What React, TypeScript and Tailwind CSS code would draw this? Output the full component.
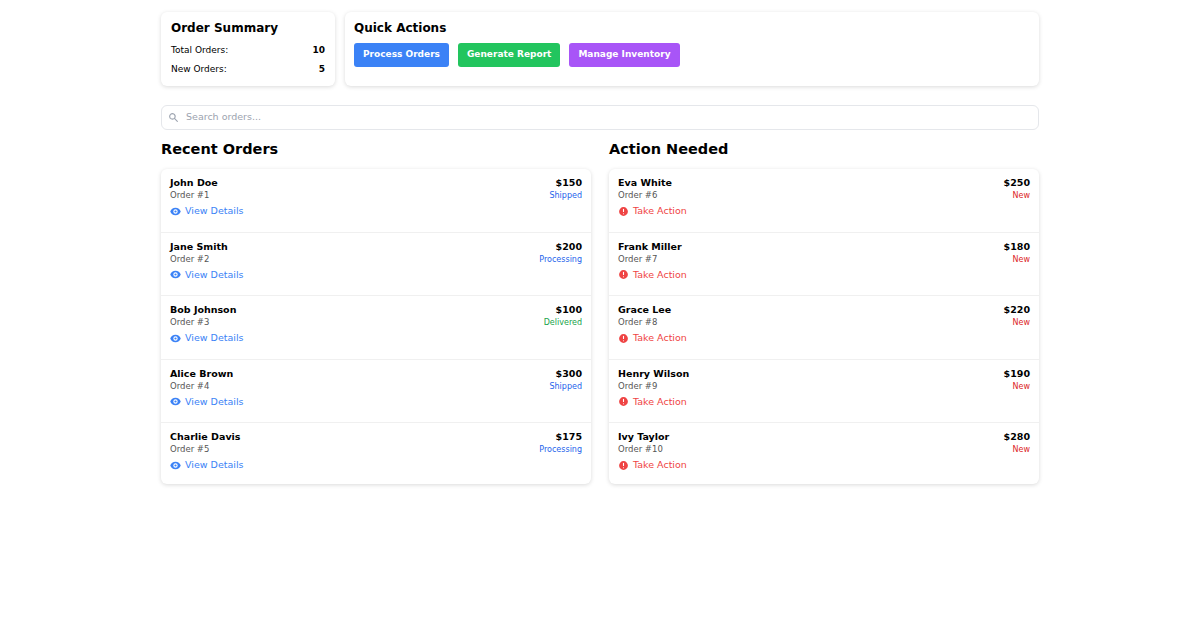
import React from "react";

const recent = [
  ["John Doe", 1, 150, "Shipped", "text-[#2563eb]"],
  ["Jane Smith", 2, 200, "Processing", "text-[#2563eb]"],
  ["Bob Johnson", 3, 100, "Delivered", "text-[#16a34a]"],
  ["Alice Brown", 4, 300, "Shipped", "text-[#2563eb]"],
  ["Charlie Davis", 5, 175, "Processing", "text-[#2563eb]"],
] as const;
const needed = [
  ["Eva White", 6, 250],
  ["Frank Miller", 7, 180],
  ["Grace Lee", 8, 220],
  ["Henry Wilson", 9, 190],
  ["Ivy Taylor", 10, 280],
] as const;

const Eye = () => (
  <svg width="11" height="11" viewBox="0 0 20 20" fill="#3b82f6">
    <path d="M10 12a2 2 0 100-4 2 2 0 000 4z" />
    <path fillRule="evenodd" d="M.458 10C1.732 5.943 5.522 3 10 3s8.268 2.943 9.542 7c-1.274 4.057-5.064 7-9.542 7S1.732 14.057.458 10zM14 10a4 4 0 11-8 0 4 4 0 018 0z" />
  </svg>
);
const Alert = () => (
  <svg width="11" height="11" viewBox="0 0 20 20" fill="#ef4444">
    <path fillRule="evenodd" d="M18 10a8 8 0 11-16 0 8 8 0 0116 0zm-7 4a1 1 0 11-2 0 1 1 0 012 0zm-1-9a1 1 0 00-1 1v4a1 1 0 102 0V6a1 1 0 00-1-1z" />
  </svg>
);

function Row({ name, n, amt, status, sc, last, action }: any) {
  return (
    <div className={`${last ? "h-[61px]" : "h-[63.5px] border-b border-[#f0f0f0]"} px-[9px] pt-[7px] flex justify-between`}>
      <div>
        <div className="text-[9.5px] font-bold text-black leading-[13px]">{name}</div>
        <div className="text-[8.5px] text-[#555] leading-[13px]">Order #{n}</div>
        <div className={`mt-[2px] flex items-center gap-[4px] text-[9.5px] ${action ? "text-[#ef4444]" : "text-[#3b82f6]"}`}>
          {action ? <Alert /> : <Eye />}
          <span>{action ? "Take Action" : "View Details"}</span>
        </div>
      </div>
      <div className="text-right">
        <div className="text-[9.5px] font-bold text-black leading-[13px]">${amt}</div>
        <div className={`text-[8px] leading-[13px] ${sc}`}>{status}</div>
      </div>
    </div>
  );
}

export default function App() {
  return (
    <div className="w-full h-[630px] bg-white" style={{ fontFamily: '"DejaVu Sans", sans-serif' }}>
      <div className="w-[878px] mx-auto pt-[12px]">
        <div className="flex gap-[10px]">
          <div className="w-[174px] h-[74px] rounded-md bg-white shadow-[0_1px_4px_rgba(0,0,0,0.15)] px-[10px] pt-[7px]">
            <div className="text-[12px] font-bold text-black">Order Summary</div>
            <div className="mt-[4px] flex justify-between text-[9px] leading-[19px] text-black"><span>Total Orders:</span><span className="font-bold">10</span></div>
            <div className="flex justify-between text-[9px] leading-[19px] text-black"><span>New Orders:</span><span className="font-bold">5</span></div>
          </div>
          <div className="flex-1 h-[74px] rounded-md bg-white shadow-[0_1px_4px_rgba(0,0,0,0.15)] px-[9px] pt-[7px]">
            <div className="text-[12px] font-bold text-black">Quick Actions</div>
            <div className="mt-[6px] flex gap-[9px]">
              <button className="h-[24px] px-[9px] rounded-[3px] bg-[#3b82f6] text-white text-[9px] font-bold">Process Orders</button>
              <button className="h-[24px] px-[9px] rounded-[3px] bg-[#22c55e] text-white text-[9px] font-bold">Generate Report</button>
              <button className="h-[24px] px-[9px] rounded-[3px] bg-[#a855f7] text-white text-[9px] font-bold">Manage Inventory</button>
            </div>
          </div>
        </div>
        <div className="mt-[19px] h-[25px] rounded-md border border-[#e5e7eb] flex items-center px-[6px] gap-[7px]">
          <svg width="11" height="11" viewBox="0 0 20 20" fill="#9ca3af"><path fillRule="evenodd" d="M8 4a4 4 0 100 8 4 4 0 000-8zM2 8a6 6 0 1110.89 3.476l4.817 4.817a1 1 0 01-1.414 1.414l-4.816-4.816A6 6 0 012 8z" /></svg>
          <span className="text-[9.5px] text-[#9ca3af]">Search orders...</span>
        </div>
        <div className="mt-[8px] flex gap-[18px]">
          <div className="flex-1">
            <div className="text-[14.5px] font-bold text-black h-[23px] leading-[22px]">Recent Orders</div>
            <div className="mt-[8px] rounded-md bg-white shadow-[0_1px_4px_rgba(0,0,0,0.15)]">
              {recent.map((r, i) => <Row key={i} name={r[0]} n={r[1]} amt={r[2]} status={r[3]} sc={r[4]} last={i === 4} />)}
            </div>
          </div>
          <div className="flex-1">
            <div className="text-[14.5px] font-bold text-black h-[23px] leading-[22px]">Action Needed</div>
            <div className="mt-[8px] rounded-md bg-white shadow-[0_1px_4px_rgba(0,0,0,0.15)]">
              {needed.map((r, i) => <Row key={i} name={r[0]} n={r[1]} amt={r[2]} status="New" sc="text-[#dc2626]" last={i === 4} action />)}
            </div>
          </div>
        </div>
      </div>
    </div>
  );
}
